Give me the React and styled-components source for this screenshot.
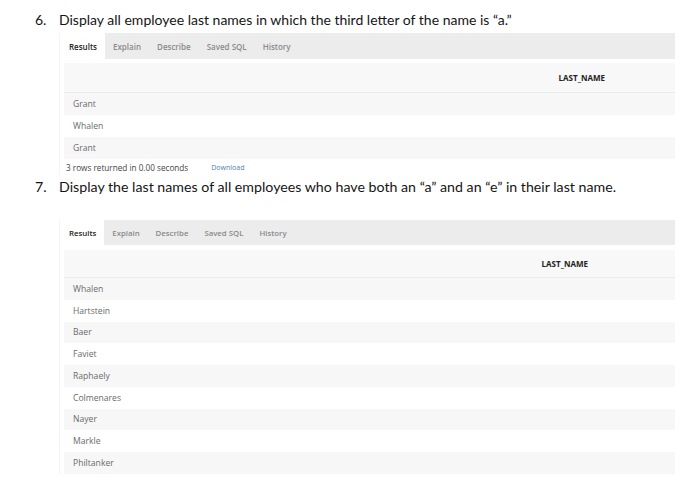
import React from 'react'
import styled, { createGlobalStyle } from 'styled-components'

const GlobalStyle = createGlobalStyle`
  html, body { margin: 0; padding: 0; background: #fff; }
  body { font-family: "Open Sans", "Liberation Sans", sans-serif; }
`

const Page = styled.div`
  width: 700px;
  height: 482px;
  padding: 11px 25px 0 35px;
  box-sizing: border-box;
  overflow: hidden;
`

const Heading = styled.div`
  display: flex;
  align-items: baseline;
  height: 17px;
  font-family: Lato, "Liberation Sans", sans-serif;
  font-size: ${p => p.$fs || 14}px;
  color: #151515;
  margin-top: ${p => p.$top || 0}px;
`

const Num = styled.span`
  width: 24px;
  flex: none;
`

const Panel = styled.div`
  margin-left: 24px;
  margin-top: ${p => p.$top}px;
  border-left: 1px solid #f4f4f4;
`

const TabBar = styled.div`
  display: flex;
  align-items: stretch;
  height: ${p => p.$h}px;
  background: #ececec;
`

const Tab = styled.div`
  display: flex;
  align-items: center;
  padding: 0 8px 0 ${p => (p.$first ? 9 : 8)}px;
  font-size: ${p => p.$fs}px;
  font-weight: 600;
  color: ${p => (p.$active ? '#222' : '#8a8a8a')};
  background: ${p => (p.$active ? '#fff' : 'transparent')};
  white-space: nowrap;
`

const Grid = styled.div`
  margin: ${p => p.$gap}px 0 0 4px;
`

const HeadRow = styled.div`
  display: flex;
  align-items: center;
  justify-content: flex-end;
  height: ${p => p.$h}px;
  padding-right: ${p => p.$right}px;
  background: #f8f8f8;
  border-bottom: 1px solid #ececec;
  font-size: 8px;
  font-weight: 700;
  color: #222;
`

const Row = styled.div`
  display: flex;
  align-items: center;
  height: ${p => p.$h}px;
  padding-left: 9px;
  background: ${p => (p.$odd ? '#f7f7f7' : '#fff')};
  font-size: 8.6px;
  font-weight: 400;
  color: #6a6a6a;
`

const Footer = styled.div`
  display: flex;
  align-items: center;
  height: 16px;
  padding-left: 6px;
  font-size: 8.2px;
  color: #444;
`

const DownloadLink = styled.span`
  margin-left: 23px;
  font-size: 7px;
  color: #4f7fae;
`

const TABS = ['Results', 'Explain', 'Describe', 'Saved SQL', 'History']

function ResultPanel({ top, barH, fs, gap, headH, headRight, rows, rowH, footer }) {
  return (
    <Panel $top={top}>
      <TabBar $h={barH}>
        {TABS.map((t, i) => (
          <Tab key={t} $first={i === 0} $active={i === 0} $fs={fs}>{t}</Tab>
        ))}
      </TabBar>
      <Grid $gap={gap}>
        <HeadRow $h={headH} $right={headRight}>LAST_NAME</HeadRow>
        {rows.map((r, i) => (
          <Row key={i} $h={rowH} $odd={i % 2 === 0}>{r}</Row>
        ))}
      </Grid>
      {footer && (
        <Footer>
          3 rows returned in 0.00 seconds
          <DownloadLink>Download</DownloadLink>
        </Footer>
      )}
    </Panel>
  )
}

export default function App() {
  return (
    <Page>
      <GlobalStyle />
      <Heading>
        <Num>6.</Num>
        Display all employee last names in which the third letter of the name is “a.”
      </Heading>
      <ResultPanel
        top={5}
        barH={26}
        fs={8}
        gap={4}
        headH={29}
        headRight={70}
        rows={['Grant', 'Whalen', 'Grant']}
        rowH={22}
        footer
      />
      <Heading $top={3} $fs={14.2}>
        <Num>7.</Num>
        Display the last names of all employees who have both an “a” and an “e” in their last name.
      </Heading>
      <ResultPanel
        top={25}
        barH={25}
        fs={7.8}
        gap={5}
        headH={27}
        headRight={87}
        rows={['Whalen', 'Hartstein', 'Baer', 'Faviet', 'Raphaely', 'Colmenares', 'Nayer', 'Markle', 'Philtanker']}
        rowH={21.75}
      />
    </Page>
  )
}
